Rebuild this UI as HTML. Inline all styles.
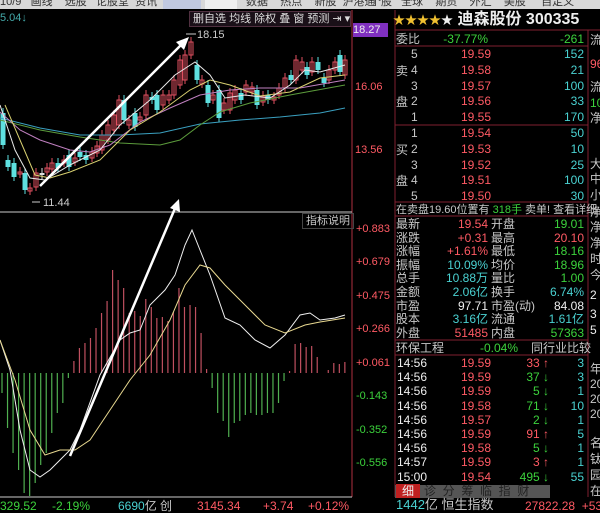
<!DOCTYPE html>
<html><head><meta charset="utf-8"><style>
body{margin:0;background:#000;width:600px;height:513px;overflow:hidden;position:relative;font-family:"Liberation Sans","Noto Sans CJK SC",sans-serif;}
.t{position:absolute;white-space:nowrap;font-size:12px;line-height:14px}
.g{color:#c8c8c8}.r{color:#ff5a64}.gr{color:#3cd23c}.c{color:#4ad2d2}.w{color:#eee}
.ra{text-align:right}
</style></head><body>
<div style="position:absolute;left:0;top:0;width:600px;height:9px;background:#d8d8d8;overflow:hidden;font-size:11px;line-height:6px;color:#333">
<span style="position:absolute;left:0;top:-1px">10/9 &nbsp; 画线 &nbsp;&nbsp; 选股 &nbsp; 论股堂 &nbsp;资讯</span>
<span style="position:absolute;left:163px;top:0;width:38px;height:9px;background:#c0c8e0"></span>
<span style="position:absolute;left:205px;top:0;width:32px;height:9px;background:#eee"></span>
<span style="position:absolute;left:246px;top:-1px">数据 &nbsp;&nbsp; 热点 &nbsp;&nbsp; 新股 &nbsp;沪港通</span>
<span style="position:absolute;left:370px;top:-1px">个股 &nbsp; 全球 &nbsp;&nbsp; 期货 &nbsp;&nbsp; 外汇 &nbsp;&nbsp; 美股 &nbsp;&nbsp;&nbsp; 自定义</span>
</div>
<svg width="600" height="513" style="position:absolute;left:0;top:0" id="s">
<line x1="352" y1="10" x2="352" y2="497" stroke="#b03040" stroke-width="1"/>
<line x1="0" y1="212" x2="352" y2="212" stroke="#ccc" stroke-width="1"/>
<line x1="395" y1="10" x2="395" y2="497" stroke="#802030"/>
<line x1="588" y1="30" x2="588" y2="497" stroke="#802030"/>
<line x1="395" y1="30" x2="600" y2="30" stroke="#802030"/>
<line x1="395" y1="46" x2="588" y2="46" stroke="#802030"/>
<line x1="395" y1="125" x2="588" y2="125" stroke="#802030"/>
<line x1="395" y1="202" x2="588" y2="202" stroke="#802030"/>
<line x1="395" y1="216" x2="588" y2="216" stroke="#802030"/>
<line x1="395" y1="340" x2="588" y2="340" stroke="#802030"/>
<line x1="395" y1="355" x2="588" y2="355" stroke="#802030"/>
<line x1="0" y1="497" x2="352" y2="497" stroke="#ccc"/>
<g id="cand"></g><g id="hist"></g>
<g fill="none" stroke-width="1">
<polyline stroke="#3aa0c0" points="0,118 40,128 80,135 120,135 160,133 200,124 240,120 280,117 320,113 345,108"/>
<polyline stroke="#5c9c3c" points="0,120 40,130 80,137 120,143 160,145 180,140 200,125 220,112 250,103 290,95 345,85"/>
<polyline stroke="#c080c0" points="0,112 20,130 40,140 70,150 90,152 110,145 140,122 170,108 200,95 230,90 260,88 300,88 345,80"/>
<polyline stroke="#d8d070" points="5,105 20,140 35,175 50,178 70,172 100,160 130,130 160,112 190,90 210,80 230,85 260,96 290,92 320,78 345,75"/>
<polyline stroke="#e8e8e8" points="0,105 15,150 30,178 45,180 70,165 100,150 120,125 150,100 175,75 195,62 210,75 225,98 245,95 270,98 290,85 305,70 320,72 345,65"/>
<polyline stroke="#f0f0f0" points="0,340 10,370 20,430 30,470 40,477 50,470 60,460 70,450 80,430 100,375 120,340 130,333 140,330 150,305 165,290 175,275 185,245 192,230 200,250 210,275 225,318 240,325 255,340 270,348 285,335 300,315 310,313 320,320 335,318 345,315"/>
<polyline stroke="#e8d890" points="0,340 15,380 30,430 45,455 60,450 75,450 90,440 110,410 130,380 150,355 170,320 185,285 200,265 210,268 225,285 245,305 265,325 285,333 305,325 320,322 345,318"/>
</g>
<g stroke="#fff" stroke-width="2.5" fill="#fff">
<line x1="40" y1="186" x2="184" y2="42"/><polygon points="189,37 176,42 184,50" stroke="none"/>
<line x1="70" y1="456" x2="176" y2="206"/><polygon points="179,199 170,208 180,212" stroke="none"/>
</g>
<g stroke="#ccc" stroke-width="1"><line x1="186" y1="34" x2="196" y2="34"/><line x1="32" y1="202" x2="40" y2="202"/></g>
</svg>
<div class="t" style="left:0;top:11px;color:#4aa;font-size:11px">5.04↓</div>
<div class="t g" style="left:189px;top:11px;width:160px;height:14px;background:#1a1018;border:1px solid #503040;font-size:11px;color:#ddd">&nbsp;删自选 均线 除权 叠 窗 预测 ⇥ ▾</div>
<div class="t" style="left:197px;top:28px;color:#ccc;font-size:11px">18.15</div>
<div class="t" style="left:43px;top:196px;color:#ccc;font-size:11px">11.44</div>
<div class="t g" style="left:302px;top:213px;font-size:11px;border:1px solid #444;padding:0 3px">指标说明</div>
<div class="t" style="left:353px;top:23px;width:35px;background:#8030c0;color:#eee;font-size:11px">18.27</div>
<div class="t r" style="left:355px;top:80px;font-size:11px">16.06</div>
<div class="t r" style="left:355px;top:143px;font-size:11px">13.56</div>
<div class="t r" style="left:356px;top:222px;font-size:11px">+0.883</div>
<div class="t r" style="left:356px;top:255px;font-size:11px">+0.679</div>
<div class="t r" style="left:356px;top:289px;font-size:11px">+0.475</div>
<div class="t r" style="left:356px;top:322px;font-size:11px">+0.266</div>
<div class="t r" style="left:356px;top:356px;font-size:11px">+0.061</div>
<div class="t gr" style="left:356px;top:389px;font-size:11px">-0.143</div>
<div class="t gr" style="left:356px;top:423px;font-size:11px">-0.352</div>
<div class="t gr" style="left:356px;top:456px;font-size:11px">-0.556</div>
<div class="t w" style="left:393px;top:10px;font-size:16px;line-height:20px;font-weight:bold"><span style="color:#f0c030;font-size:12px">★★★★</span><span style="font-size:12px">★</span> 迪森股份 300335</div>
<div id="rp"></div>
<div class="t" style="left:395px;top:485px;width:155px;height:13px;background:#555"></div>
<div class="t w" style="left:396px;top:484px;width:24px;background:#c02020;text-align:center">细</div>
<div class="t" style="left:424px;top:484px;color:#222">诊 &nbsp;分 &nbsp;筹 &nbsp;临 &nbsp;指 &nbsp;财</div>
<div class="t" style="left:0;top:498px;width:600px;height:15px;background:#000"></div>
<div class="t gr" style="left:0;top:499px">329.52</div>
<div class="t gr" style="left:52px;top:499px">-2.19%</div>
<div class="t c" style="left:118px;top:499px">6690<span class="g">亿 创</span></div>
<div class="t r" style="left:197px;top:499px">3145.34</div>
<div class="t r" style="left:263px;top:499px">+3.74</div>
<div class="t r" style="left:308px;top:499px">+0.12%</div>
<div class="t c" style="left:396px;top:498px;font-size:13px">1442<span class="g">亿 恒生指数</span></div>
<div class="t r" style="left:525px;top:499px">27822.28 &nbsp;+53</div>
<script>
var ns="http://www.w3.org/2000/svg";
function el(p,t,a){var e=document.createElementNS(ns,t);for(var k in a)e.setAttribute(k,a[k]);p.appendChild(e);return e;}
var C=[[3,113,145,0],[8,160,167,0],[14,163,177,0],[20,172,174,1],[25,173,190,0],[30,188,191,1],[36,173,187,1],[42,173,175,2],[47,168,172,1],[52,163,169,1],[58,163,168,0],[64,160,163,1],[69,155,167,0],[75,158,162,1],[80,152,157,0],[86,155,160,0],[92,152,158,1],[97,146,153,1],[102,135,150,1],[108,125,140,1],[114,115,130,1],[119,100,125,1],[124,100,120,0],[129,120,125,1],[135,113,127,0],[140,117,120,1],[146,95,115,1],[152,97,100,0],[157,95,110,0],[163,95,105,1],[169,95,100,1],[174,80,95,1],[180,60,85,1],[185,55,80,1],[191,42,55,1],[197,65,80,0],[202,80,84,1],[208,85,103,0],[213,95,100,1],[219,90,118,0],[224,103,110,1],[230,93,110,1],[235,90,100,1],[241,93,100,0],[246,85,92,1],[252,87,92,1],[257,90,105,0],[263,96,102,1],[268,95,100,0],[274,97,100,1],[279,88,95,1],[285,78,88,1],[291,75,80,0],[296,60,80,1],[302,62,70,1],[307,67,75,0],[312,62,72,1],[318,62,70,0],[324,78,83,0],[329,70,80,1],[335,62,70,1],[340,55,72,0],[345,60,75,1]];
var g=document.getElementById("cand");
C.forEach(function(c){var col=c[3]==1?"#e05060":c[3]==0?"#5ee0e0":"#ddd";
el(g,"line",{x1:c[0],x2:c[0],y1:c[1]-5,y2:c[2]+4,stroke:col});
if(c[3]==1)el(g,"rect",{x:c[0]-2,y:c[1],width:4,height:c[2]-c[1],fill:"none",stroke:col});
else el(g,"rect",{x:c[0]-2.5,y:c[1],width:5,height:Math.max(1,c[2]-c[1]),fill:col});});
var H=[-20,-55,-80,-97,-120,-123,-110,-92,-80,-60,-40,-30,-5,12,25,30,35,45,60,72,103,93,85,60,62,57,74,66,55,56,52,61,85,66,68,66,40,4,-15,-40,-48,-64,-50,-48,-42,-40,-42,-42,-40,-40,-30,-8,2,29,30,26,27,16,0,3,10,9,11];
var h=document.getElementById("hist");
H.forEach(function(v,i){var x=2+i*5.53;el(h,"line",{x1:x,x2:x,y1:373,y2:373-v,stroke:v>0?"#c05060":"#50b050","stroke-width":1.2});});
var rp=document.getElementById("rp");
function tx(x,y,cls,s,ra,fs){var d=document.createElement("div");d.className="t "+cls;d.style.top=y+"px";if(fs)d.style.fontSize=fs+"px";if(ra){d.style.right=(600-x)+"px";}else d.style.left=x+"px";d.innerHTML=s;rp.appendChild(d);}
tx(396,32,"g","委比");tx(488,32,"gr","-37.77%",1);tx(584,32,"gr","-261",1);
var sp=[["5","19.59","152"],["4","19.58","21"],["3","19.57","100"],["2","19.56","33"],["1","19.55","170"],["1","19.54","50"],["2","19.53","10"],["3","19.52","25"],["4","19.51","100"],["5","19.50","30"]];
sp.forEach(function(r,i){var y=47+i*15.8;tx(411,y,"g",r[0]);tx(491,y,"r",r[1],1);tx(584,y,"c",r[2],1);});
tx(396,64,"g","卖");tx(396,95,"g","盘");tx(396,143,"g","买");tx(396,174,"g","盘");
tx(396,203,"g","在卖盘19.60位置有 <span class='gr'>318手</span> 卖单! 查看详细",0,11);
var st=[["最新","19.54","r","开盘","19.01","gr"],["涨跌","+0.31","r","最高","20.10","r"],["涨幅","+1.61%","r","最低","18.16","gr"],["振幅","10.09%","c","均价","18.96","gr"],["总手","10.88万","c","量比","1.00","gr"],["金额","2.06亿","c","换手","6.74%","c"],["市盈","97.71","w","市盈(动)","84.08","w"],["股本","3.16亿","c","流通","1.61亿","c"],["外盘","51485","r","内盘","57363","gr"]];
st.forEach(function(r,i){var y=217+i*13.6;tx(396,y,"g",r[0]);tx(488,y,r[2],r[1],1);tx(491,y,"g",r[3]);tx(584,y,r[5],r[4],1);});
tx(396,341,"g","环保工程");tx(518,341,"gr","-0.04%",1);tx(531,341,"g","同行业比较");
var tk=[["14:56","19.59","33","r","↑","3"],["14:56","19.59","37","gr","↓","3"],["14:56","19.59","5","gr","↓","1"],["14:56","19.58","71","gr","↓","10"],["14:56","19.57","2","gr","↓","1"],["14:56","19.59","91","r","↑","5"],["14:56","19.58","5","gr","↓","1"],["14:57","19.59","3","r","↑","1"],["15:00","19.54","495","gr","↓","55"]];
tk.forEach(function(r,i){var y=356+i*14.2;tx(397,y,"w",r[0]);tx(491,y,"r",r[1],1);tx(549,y,r[3],r[2]+" "+r[4],1);tx(584,y,"c",r[5],1);});
var fr=[["流",33,"g"],["96",57,"r"],["流",80,"g"],["10",96,"gr"],["净",111,"g"],["大",157,"g"],["中",172,"g"],["小",188,"g"],["净",205,"g"],["净",220,"g"],["净",236,"g"],["时",252,"g"],["今",268,"g"],["2",288,"w"],["3",307,"w"],["5",323,"w"],["年",362,"g"],["20",377,"g"],["20",392,"g"],["20",407,"g"],["名",436,"g"],["钛",452,"g"],["园",468,"g"],["在",484,"g"]];
fr.forEach(function(r){tx(590,r[1],r[2],r[0]);});
</script>
</body></html>
